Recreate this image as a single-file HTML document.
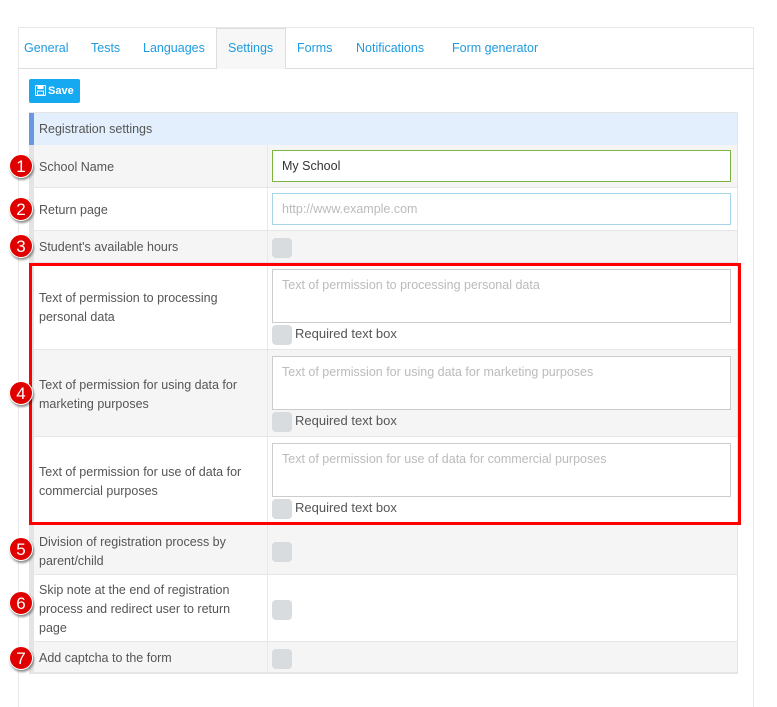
<!DOCTYPE html>
<html><head><meta charset="utf-8"><style>
*{box-sizing:border-box;margin:0;padding:0}
body{width:777px;height:698px;background:#fff;font-family:"Liberation Sans",sans-serif;font-size:13px;color:#555;position:relative;overflow:hidden}
.a{position:absolute}
.tab{position:absolute;top:41px;color:#1e9be0;font-size:12.5px}
.row{position:absolute;left:34px;width:703px;border-bottom:1px solid #e6e6e6}
.g{background:#f5f5f5}.w{background:#fff}
.lbl{position:absolute;left:5px;font-size:12.5px;line-height:19px;color:#555;margin-top:1px}
.sep{position:absolute;left:233px;top:0;bottom:0;width:1px;background:#e8e8e8}
.inp{position:absolute;left:238px;width:459px;height:32px;border:1px solid #ccc;background:#fff;font-size:12.5px;padding:8px 9px;color:#bbb}
.ta{position:absolute;left:238px;width:459px;height:54px;border:1px solid #ccc;background:#fff;font-size:12.5px;padding:8px 9px;color:#bbb}
.cb{position:absolute;left:238px;width:20px;height:20px;border-radius:4px;background:#d8dcde}
.req{position:absolute;left:261px;font-size:13px;color:#555}
.b{position:absolute;left:9px;width:24px;height:24px;border-radius:50%;background:#e10000;color:#fff;font-size:17px;text-align:center;line-height:24px;box-shadow:1px 2px 2px rgba(0,0,0,.45);border:1px solid #fff}
</style></head><body>
<div class="a" style="left:18px;top:27px;width:736px;height:680px;border:1px solid #e8e8e8;border-bottom:none"></div>
<div class="a" style="left:18px;top:68px;width:736px;height:1px;background:#ddd"></div>
<div class="a" style="left:216px;top:28px;width:70px;height:41px;background:#f7f7f7;border:1px solid #ddd;border-bottom:none"></div>
<div class="tab" style="left:24px">General</div>
<div class="tab" style="left:91px">Tests</div>
<div class="tab" style="left:143px">Languages</div>
<div class="tab" style="left:228px">Settings</div>
<div class="tab" style="left:297px">Forms</div>
<div class="tab" style="left:356px">Notifications</div>
<div class="tab" style="left:452px">Form generator</div>
<div class="a" style="left:29px;top:79px;width:51px;height:24px;background:#14a9f0;border-radius:2px;color:#fff;font-weight:bold;font-size:11px;line-height:24px;padding-left:19px">Save
<svg class="a" style="left:6px;top:6px" width="11" height="11" viewBox="0 0 11 11"><rect x="0.5" y="0.5" width="10" height="10" rx="1" fill="none" stroke="#fff"/><rect x="2.5" y="1" width="6" height="3" fill="#fff"/><rect x="2.5" y="6" width="6" height="4" fill="none" stroke="#fff"/></svg></div>
<div class="a" style="left:29px;top:112px;width:709px;height:562px;background:#e4e4e4"></div>
<div class="a" style="left:29px;top:113px;width:708px;height:32px;background:#e3effc;border-left:5px solid #6a98e0"><span class="a" style="left:5px;top:9px;font-size:12.5px;color:#555">Registration settings</span></div>
<div class="row g" style="top:145px;height:43px"><div class="sep"></div><div class="lbl" style="top:12px">School Name</div><div class="inp" style="top:5px;border-color:#7ab540;color:#333">My School</div></div>
<div class="row w" style="top:188px;height:43px"><div class="sep"></div><div class="lbl" style="top:12px">Return page</div><div class="inp" style="top:5px;border-color:#a8d4ea">http://www.example.com</div></div>
<div class="row g" style="top:231px;height:32px"><div class="sep"></div><div class="lbl" style="top:6px">Student's available hours</div><div class="cb" style="top:7px"></div></div>
<div class="row w" style="top:263px;height:87px"><div class="sep"></div><div class="lbl" style="top:25px">Text of permission to processing<br>personal data</div><div class="ta" style="top:6px">Text of permission to processing personal data</div><div class="cb" style="top:62px"></div><div class="req" style="top:63px">Required text box</div></div>
<div class="row g" style="top:350px;height:87px"><div class="sep"></div><div class="lbl" style="top:25px">Text of permission for using data for<br>marketing purposes</div><div class="ta" style="top:6px">Text of permission for using data for marketing purposes</div><div class="cb" style="top:62px"></div><div class="req" style="top:63px">Required text box</div></div>
<div class="row w" style="top:437px;height:87px"><div class="sep"></div><div class="lbl" style="top:25px">Text of permission for use of data for<br>commercial purposes</div><div class="ta" style="top:6px">Text of permission for use of data for commercial purposes</div><div class="cb" style="top:62px"></div><div class="req" style="top:63px">Required text box</div></div>
<div class="row g" style="top:524px;height:51px"><div class="sep"></div><div class="lbl" style="top:8px">Division of registration process by<br>parent/child</div><div class="cb" style="top:18px"></div></div>
<div class="row w" style="top:575px;height:67px"><div class="sep"></div><div class="lbl" style="top:5px">Skip note at the end of registration<br>process and redirect user to return<br>page</div><div class="cb" style="top:25px"></div></div>
<div class="row g" style="top:642px;height:31px"><div class="sep"></div><div class="lbl" style="top:6px">Add captcha to the form</div><div class="cb" style="top:7px"></div></div>
<div class="a" style="left:29px;top:263px;width:712px;height:262px;border:3px solid #f00"></div>
<div class="b" style="top:154px">1</div>
<div class="b" style="top:197px">2</div>
<div class="b" style="top:234px">3</div>
<div class="b" style="top:381px">4</div>
<div class="b" style="top:537px">5</div>
<div class="b" style="top:591px">6</div>
<div class="b" style="top:646px">7</div>
</body></html>
